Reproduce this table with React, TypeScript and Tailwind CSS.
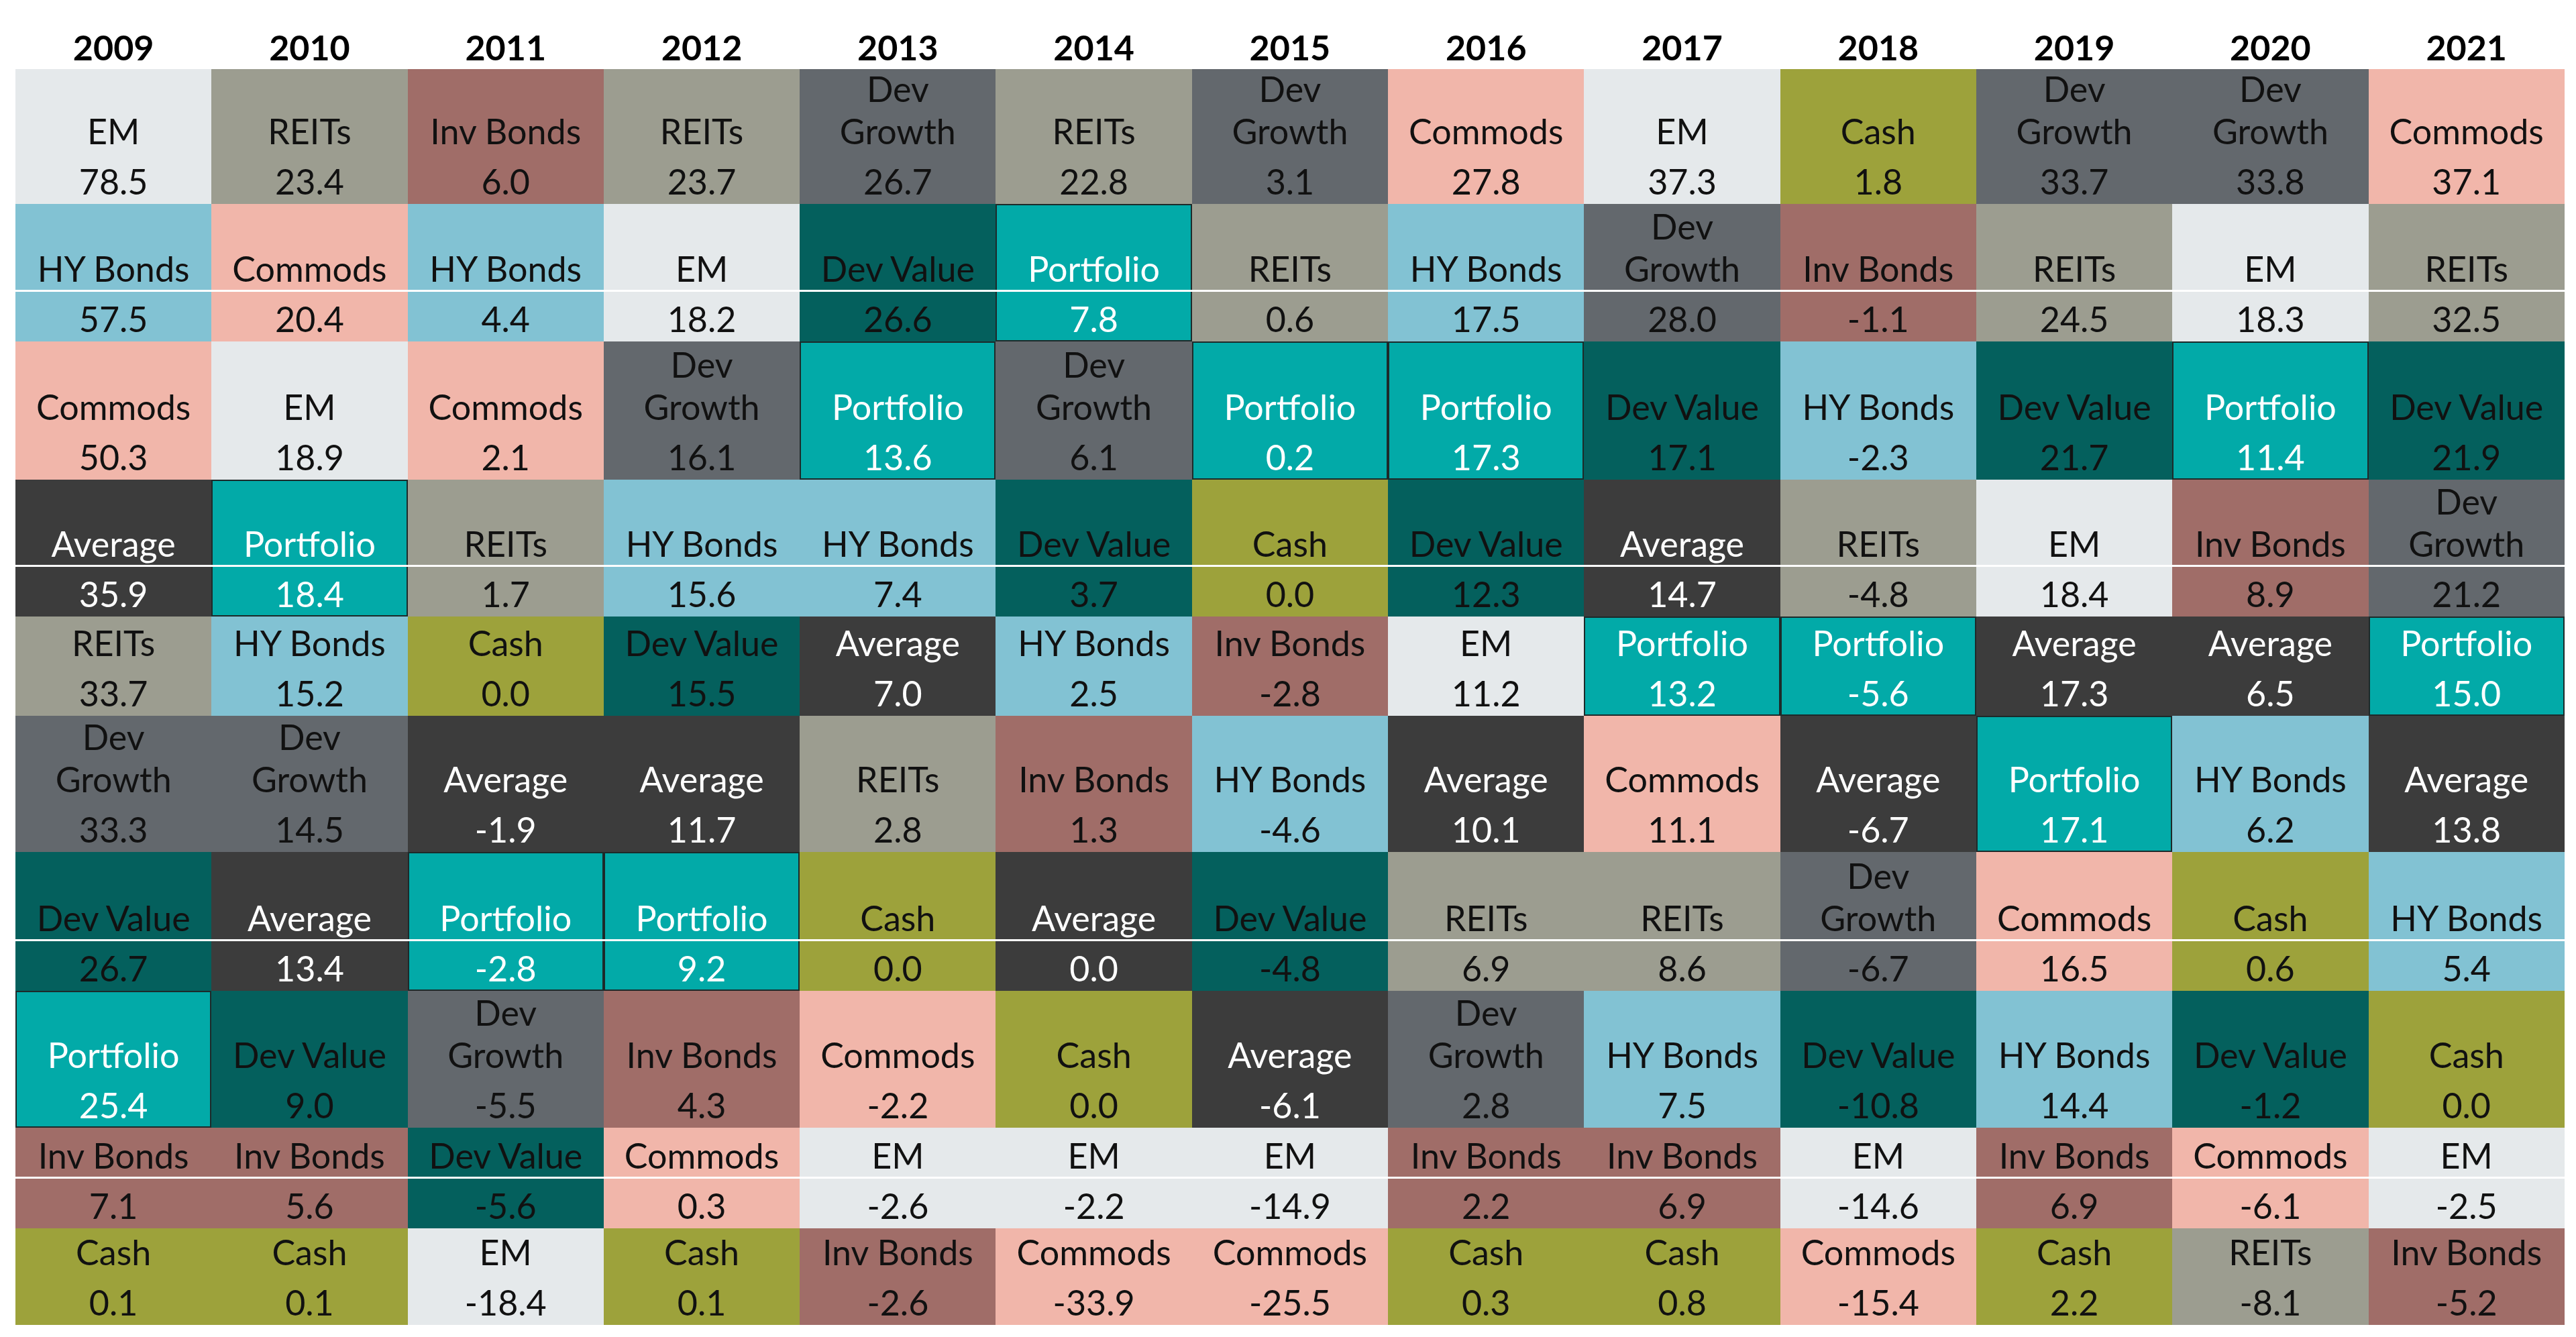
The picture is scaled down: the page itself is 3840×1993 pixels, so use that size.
import React from "react";

type Cell = [string, string];

const columns: { year: string; cells: Cell[] }[] = [
  { year: "2009", cells: [["EM", "78.5"], ["HY Bonds", "57.5"], ["Commods", "50.3"], ["Average", "35.9"], ["REITs", "33.7"], ["Dev Growth", "33.3"], ["Dev Value", "26.7"], ["Portfolio", "25.4"], ["Inv Bonds", "7.1"], ["Cash", "0.1"]] },
  { year: "2010", cells: [["REITs", "23.4"], ["Commods", "20.4"], ["EM", "18.9"], ["Portfolio", "18.4"], ["HY Bonds", "15.2"], ["Dev Growth", "14.5"], ["Average", "13.4"], ["Dev Value", "9.0"], ["Inv Bonds", "5.6"], ["Cash", "0.1"]] },
  { year: "2011", cells: [["Inv Bonds", "6.0"], ["HY Bonds", "4.4"], ["Commods", "2.1"], ["REITs", "1.7"], ["Cash", "0.0"], ["Average", "-1.9"], ["Portfolio", "-2.8"], ["Dev Growth", "-5.5"], ["Dev Value", "-5.6"], ["EM", "-18.4"]] },
  { year: "2012", cells: [["REITs", "23.7"], ["EM", "18.2"], ["Dev Growth", "16.1"], ["HY Bonds", "15.6"], ["Dev Value", "15.5"], ["Average", "11.7"], ["Portfolio", "9.2"], ["Inv Bonds", "4.3"], ["Commods", "0.3"], ["Cash", "0.1"]] },
  { year: "2013", cells: [["Dev Growth", "26.7"], ["Dev Value", "26.6"], ["Portfolio", "13.6"], ["HY Bonds", "7.4"], ["Average", "7.0"], ["REITs", "2.8"], ["Cash", "0.0"], ["Commods", "-2.2"], ["EM", "-2.6"], ["Inv Bonds", "-2.6"]] },
  { year: "2014", cells: [["REITs", "22.8"], ["Portfolio", "7.8"], ["Dev Growth", "6.1"], ["Dev Value", "3.7"], ["HY Bonds", "2.5"], ["Inv Bonds", "1.3"], ["Average", "0.0"], ["Cash", "0.0"], ["EM", "-2.2"], ["Commods", "-33.9"]] },
  { year: "2015", cells: [["Dev Growth", "3.1"], ["REITs", "0.6"], ["Portfolio", "0.2"], ["Cash", "0.0"], ["Inv Bonds", "-2.8"], ["HY Bonds", "-4.6"], ["Dev Value", "-4.8"], ["Average", "-6.1"], ["EM", "-14.9"], ["Commods", "-25.5"]] },
  { year: "2016", cells: [["Commods", "27.8"], ["HY Bonds", "17.5"], ["Portfolio", "17.3"], ["Dev Value", "12.3"], ["EM", "11.2"], ["Average", "10.1"], ["REITs", "6.9"], ["Dev Growth", "2.8"], ["Inv Bonds", "2.2"], ["Cash", "0.3"]] },
  { year: "2017", cells: [["EM", "37.3"], ["Dev Growth", "28.0"], ["Dev Value", "17.1"], ["Average", "14.7"], ["Portfolio", "13.2"], ["Commods", "11.1"], ["REITs", "8.6"], ["HY Bonds", "7.5"], ["Inv Bonds", "6.9"], ["Cash", "0.8"]] },
  { year: "2018", cells: [["Cash", "1.8"], ["Inv Bonds", "-1.1"], ["HY Bonds", "-2.3"], ["REITs", "-4.8"], ["Portfolio", "-5.6"], ["Average", "-6.7"], ["Dev Growth", "-6.7"], ["Dev Value", "-10.8"], ["EM", "-14.6"], ["Commods", "-15.4"]] },
  { year: "2019", cells: [["Dev Growth", "33.7"], ["REITs", "24.5"], ["Dev Value", "21.7"], ["EM", "18.4"], ["Average", "17.3"], ["Portfolio", "17.1"], ["Commods", "16.5"], ["HY Bonds", "14.4"], ["Inv Bonds", "6.9"], ["Cash", "2.2"]] },
  { year: "2020", cells: [["Dev Growth", "33.8"], ["EM", "18.3"], ["Portfolio", "11.4"], ["Inv Bonds", "8.9"], ["Average", "6.5"], ["HY Bonds", "6.2"], ["Cash", "0.6"], ["Dev Value", "-1.2"], ["Commods", "-6.1"], ["REITs", "-8.1"]] },
  { year: "2021", cells: [["Commods", "37.1"], ["REITs", "32.5"], ["Dev Value", "21.9"], ["Dev Growth", "21.2"], ["Portfolio", "15.0"], ["Average", "13.8"], ["HY Bonds", "5.4"], ["Cash", "0.0"], ["EM", "-2.5"], ["Inv Bonds", "-5.2"]] },
];

const styles: Record<string, string> = {
  EM: "bg-[#e5e9eb] text-[#111111]",
  REITs: "bg-[#9c9d90] text-[#111111]",
  "Inv Bonds": "bg-[#a06d68] text-[#111111]",
  "HY Bonds": "bg-[#82c2d3] text-[#111111]",
  Commods: "bg-[#f1b6aa] text-[#111111]",
  "Dev Growth": "bg-[#63686d] text-[#111111]",
  "Dev Value": "bg-[#04605d] text-[#111111]",
  Portfolio: "bg-[#02aaa8] text-white shadow-[inset_0_0_0_2px_#1d2a2a]",
  Average: "bg-[#3c3c3c] text-white",
  Cash: "bg-[#9da23b] text-[#111111]",
};

const linedRows = new Set([1, 3, 6, 8]);

function TableCell({ label, value, lined }: { label: string; value: string; lined: boolean }) {
  return (
    <div className={`flex flex-col items-center justify-end text-center ${styles[label]}`}>
      <div className="leading-[63px] whitespace-nowrap">
        {label === "Dev Growth" ? (
          <>
            Dev
            <br />
            Growth
          </>
        ) : (
          label
        )}
      </div>
      <div
        className={`w-full border-t-[3px] pt-[6px] leading-[68px] ${
          lined ? "border-white" : "border-transparent"
        }`}
      >
        {value}
      </div>
    </div>
  );
}

export default function App() {
  return (
    <div className="w-[3840px] h-[1993px] bg-white font-[Lato,sans-serif] text-[52px] text-[#111111]">
      <div className="pl-[23px]">
        <div className="grid grid-cols-[repeat(13,292.3px)] h-[103px]">
          {columns.map((c) => (
            <div key={c.year} className="flex items-end justify-center pb-[2px] font-bold leading-[62px] text-black">
              {c.year}
            </div>
          ))}
        </div>
        <div className="grid grid-cols-[repeat(13,292.3px)] grid-rows-[201px_205px_206px_204px_148px_203px_207px_204px_150px_144px] grid-flow-col">
          {columns.map((c) =>
            c.cells.map(([label, value], i) => (
              <TableCell key={c.year + i} label={label} value={value} lined={linedRows.has(i)} />
            ))
          )}
        </div>
      </div>
    </div>
  );
}
